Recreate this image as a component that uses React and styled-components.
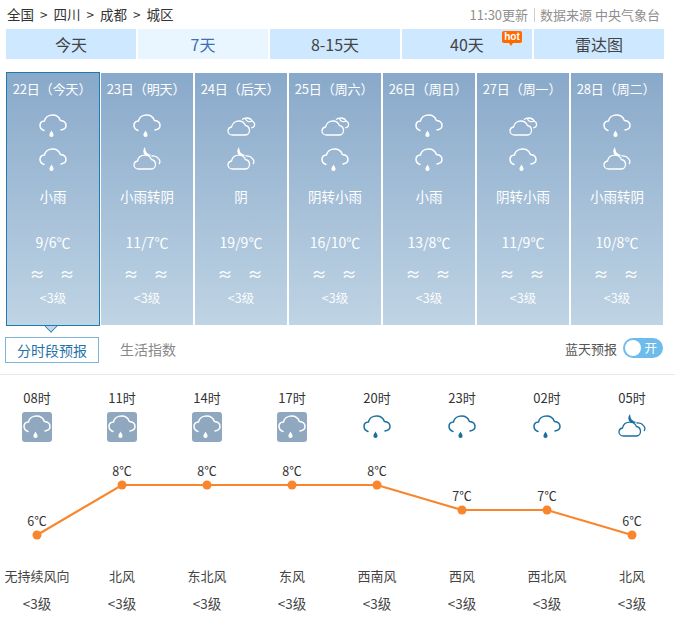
import React from "react";
import styled, { createGlobalStyle } from "styled-components";

const Global = createGlobalStyle`
  html, body { margin: 0; padding: 0; background: #fff; }
  body { font-family: "Noto Sans CJK SC", "Noto Sans", sans-serif; color: #333; overflow: hidden; }
  * { box-sizing: border-box; }
`;

const Page = styled.div`width: 675px; height: 635px; position: relative; overflow: hidden;`;
const TopBar = styled.div`
  height: 29px; padding: 0 15px 0 7px; display: flex; justify-content: space-between; align-items: center; line-height: 29px;
`;
const Crumb = styled.div`color: #333; font-size: 13.5px; white-space: pre; display: flex; gap: 6px;`;
const Source = styled.div`color: #8f8f8f; font-size: 13px; white-space: pre; display: flex; align-items: center;`;
const Sep = styled.i`display: inline-block; width: 1px; height: 14px; background: #ccc; margin: 0 5px 0 6px;`;

const Tabs = styled.div`display: flex; gap: 2px; padding-left: 6px;`;
const Tab = styled.div`
  width: 130px; height: 30px; line-height: 30px; text-align: center; font-size: 16px; position: relative;
  background: ${p => (p.$active ? "#eaf6ff" : "#cde8ff")};
  color: ${p => (p.$active ? "#3f6fb6" : "#444")};
`;
const Hot = styled.span`
  position: absolute; left: 100px; top: 2px; width: 20px; height: 12px; background: #ff6a00; color: #fff; font: bold 10px/12px "Liberation Sans", sans-serif;
  border-radius: 2px; text-align: center;
  &::after { content: ""; position: absolute; left: 7px; bottom: -3px; border: 2px solid transparent; border-top: 3px solid #ff6a00; border-bottom: 0; }
`;

const Days = styled.div`display: flex; gap: 2px; padding-left: 6px; margin-top: 13px; height: 254px; align-items: flex-start;`;
const Day = styled.div`
  position: relative; flex: none; display: flex; flex-direction: column; align-items: center; color: #fff;
  width: ${p => (p.$active ? "94px" : "92px")};
  height: ${p => (p.$active ? "254px" : "252px")};
  margin-top: ${p => (p.$active ? "0" : "1px")};
  padding-top: 6px;
  margin-right: ${p => (p.$active ? "-1px" : "0")};
  border: ${p => (p.$active ? "1px solid #1e7bb0" : "0")};
  background: linear-gradient(180deg, #89a9ca 0%, #bfd4e4 100%);
`;
const Arrow = styled.span`
  position: absolute; left: 39px; bottom: -6px; width: 10px; height: 10px; transform: rotate(45deg);
  background: #c3d7e6; border-right: 1.5px solid #1e7bb0; border-bottom: 1.5px solid #1e7bb0;
  clip-path: polygon(100% 0, 100% 100%, 0 100%);
`;
const DayHead = styled.div`height: 20px; line-height: 20px; font-size: 13px; white-space: nowrap; letter-spacing: -0.1px; margin-left: -2px;`;
const DayIcons = styled.div`margin-top: 15px; display: flex; flex-direction: column; gap: 12px; height: 56px; align-items: center;`;
const Desc = styled.div`margin-top: 16px; height: 20px; line-height: 20px; font-size: 13.5px;`;
const Temp = styled.div`margin-top: 26px; height: 20px; line-height: 20px; font-size: 14px;`;
const Waves = styled.div`margin-top: 12px; height: 20px; line-height: 20px; font-size: 15px; font-weight: 500; display: flex; gap: 15px; margin-left: -2px;`;
const Level = styled.div`margin-top: 4px; height: 20px; line-height: 20px; font-size: 12.5px; opacity: .95;`;

const SubBar = styled.div`
  margin-top: 11px; height: 38px; padding: 0 12px 11px 5px; display: flex; align-items: flex-start; border-bottom: 1px solid #e8e8e8; position: relative;
`;
const SubTab = styled.div`
  height: 26px; line-height: 24px; font-size: 14px; text-align: center; color: ${p => (p.$active ? "#1f72a8" : "#888")};
  width: ${p => (p.$active ? "94px" : "auto")};
  margin-left: ${p => (p.$active ? "0" : "21px")};
  border: ${p => (p.$active ? "1px solid #7fb6d8" : "0")};
`;
const Blue = styled.div`margin-left: auto; display: flex; align-items: center; gap: 6px; font-size: 13px; color: #555; height: 20px; margin-top: 1px;`;
const Toggle = styled.div`
  width: 40px; height: 20px; border-radius: 10px; background: #6ebcec; position: relative; color: #fff; font-size: 12.5px; line-height: 20px; text-align: right; padding-right: 6px;
  &::before { content: ""; position: absolute; left: 2px; top: 2px; width: 16px; height: 16px; border-radius: 50%; background: #fff; }
`;

const Hours = styled.div`display: grid; grid-template-columns: repeat(8, 85px); margin-left: -5.5px; margin-top: 13px; text-align: center;`;
const WindRows = styled(Hours)`margin-top: 0;`;
const HourLabel = styled.div`height: 20px; line-height: 20px; font-size: 13px; color: #333;`;
const HourIcon = styled.div`height: 30px; margin-top: 4px; display: flex; justify-content: center;`;
const Tile = styled.div`
  width: 30px; height: 30px; border-radius: 3px; display: flex; align-items: center; justify-content: center; padding-bottom: 2px;
  background: ${p => (p.$filled ? "#90a8bf" : "transparent")};
`;

const Chart = styled.div`position: relative; height: 124px; width: 675px;`;
const ChartSvg = styled.svg`display: block; width: 675px; height: 124px;`;
const TempTag = styled.span`
  position: absolute; width: 60px; margin-left: -30px; text-align: center; font-size: 12.5px; line-height: 16px; color: #333;
`;
const Wind = styled.div`height: 20px; line-height: 20px; font-size: 13px; color: #444; white-space: nowrap;`;
const WindLevel = styled.div`height: 20px; line-height: 20px; font-size: 13.5px; color: #444; margin-top: 7px;`;
const Glyph = styled.svg`display: block; width: 28px; height: 22px; overflow: visible; flex: none;`;

const RainGlyph = ({ color = "#fff" }) => (
  <Glyph viewBox="0 0 28 22" fill="none">
    <path d="M5 16.5C2.5 15.5 1 13.8 1 11.5 1 9 3 7.2 5.4 7 6.2 3.6 9.6 1 13.6 1c3.8 0 6.6 2.2 7.8 5.4C24.8 6.6 27 8.6 27 11.5c0 2.1-1.8 4-5 4.5" stroke={color} strokeWidth="1.5" strokeLinecap="round" />
    <path d="M12.5 16.5c-.8 1.6-2.1 3-2.1 4.5a2.1 2.1 0 0 0 4.2 0c0-1.5-1.3-2.9-2.1-4.5z" fill={color} />
  </Glyph>
);
const CloudyGlyph = ({ color = "#fff" }) => (
  <Glyph viewBox="0 0 28 22" fill="none" stroke={color} strokeWidth="1.3">
    <path d="M5.5 21C3 21 1 19.3 1 17c0-2.2 1.6-3.6 3.5-4C5.2 9.800 8 7 12 7c3 0 5.400 1.800 6.400 4.500C21 12 22.500 14.200 22.500 16.500 22.500 19 20.500 21 18 21z" />
    <path d="M15 5.600C16.300 4.500 18 4 20 4c2.500 0 4.200 1.200 5.200 3 1.600.7 2.400 2 2.400 3.400 0 1.800-1.500 3.100-3.500 3.400" />
    <path d="M18.500 5c1 2.500 3.500 3.500 7 2" />
  </Glyph>
);
const MoonGlyph = ({ color = "#fff" }) => (
  <Glyph viewBox="0 0 28 22" fill="none" stroke={color} strokeWidth="1.3">
    <path d="M5.500 21C3 21 1 19.300 1 17c0-2.200 1.600-3.600 3.500-4C5.200 9.800 8 7.200 12 7.200c3 0 5.400 1.700 6.400 4.300 2.600.5 4.100 2.700 4.100 5 0 2.500-2 4.500-4.500 4.500z" />
    <path d="M18.500 8c2.800-.4 5.500.6 6.800 2.400 1.800 1.400 2.200 3.800.7 5.600" />
    <path d="M12-1C9.500 2 10 6 13 7.500c2 1 4 .5 5.500-.5-3-.5-5-2-5.700-4C12.400 1.800 12.200.5 12-1z" fill={color} stroke="none" />
  </Glyph>
);
const glyphs = { rain: RainGlyph, cloud: CloudyGlyph, moon: MoonGlyph };

const days = [
  { h: "22日（今天）", i: ["rain", "rain"], d: "小雨", t: "9/6℃", active: true },
  { h: "23日（明天）", i: ["rain", "moon"], d: "小雨转阴", t: "11/7℃" },
  { h: "24日（后天）", i: ["cloud", "moon"], d: "阴", t: "19/9℃" },
  { h: "25日（周六）", i: ["cloud", "rain"], d: "阴转小雨", t: "16/10℃" },
  { h: "26日（周日）", i: ["rain", "rain"], d: "小雨", t: "13/8℃" },
  { h: "27日（周一）", i: ["cloud", "rain"], d: "阴转小雨", t: "11/9℃" },
  { h: "28日（周二）", i: ["rain", "moon"], d: "小雨转阴", t: "10/8℃" },
];

const hours = [
  { h: "08时", k: "rain", f: true, t: 6, wind: "无持续风向" },
  { h: "11时", k: "rain", f: true, t: 8, wind: "北风" },
  { h: "14时", k: "rain", f: true, t: 8, wind: "东北风" },
  { h: "17时", k: "rain", f: true, t: 8, wind: "东风" },
  { h: "20时", k: "rain", t: 8, wind: "西南风" },
  { h: "23时", k: "rain", t: 7, wind: "西风" },
  { h: "02时", k: "rain", t: 7, wind: "西北风" },
  { h: "05时", k: "moon", t: 6, wind: "北风" },
];
const px = i => 37 + i * 85;
const py = t => 93 - (t - 6) * 25;

export default function App() {
  return (
    <Page>
      <Global />
      <TopBar>
        <Crumb><span>全国</span><span>&gt;</span><span>四川</span><span>&gt;</span><span>成都</span><span>&gt;</span><span>城区</span></Crumb>
        <Source>11:30更新<Sep />数据来源 中央气象台</Source>
      </TopBar>
      <Tabs>
        <Tab>今天</Tab>
        <Tab $active>7天</Tab>
        <Tab>8-15天</Tab>
        <Tab>40天<Hot>hot</Hot></Tab>
        <Tab>雷达图</Tab>
      </Tabs>
      <Days>
        {days.map(x => (
          <Day key={x.h} $active={x.active}>
            <DayHead>{x.h}</DayHead>
            <DayIcons>
              {x.i.map((k, n) => {
                const G = glyphs[k];
                return <G key={n} />;
              })}
            </DayIcons>
            <Desc>{x.d}</Desc>
            <Temp>{x.t}</Temp>
            <Waves><span>≈</span><span>≈</span></Waves>
            <Level>&lt;3级</Level>
            {x.active && <Arrow />}
          </Day>
        ))}
      </Days>
      <SubBar>
        <SubTab $active>分时段预报</SubTab>
        <SubTab>生活指数</SubTab>
        <Blue>蓝天预报<Toggle>开</Toggle></Blue>
      </SubBar>
      <Hours>
        {hours.map(x => (
          <HourLabel key={x.h}>{x.h}</HourLabel>
        ))}
        {hours.map(x => {
          const G = glyphs[x.k];
          return (
            <HourIcon key={x.h}>
              <Tile $filled={x.f}><G color={x.f ? "#fff" : "#1a6f9f"} /></Tile>
            </HourIcon>
          );
        })}
      </Hours>
      <Chart>
        <ChartSvg viewBox="0 0 675 124">
          <polyline fill="none" stroke="#f9852c" strokeWidth="2.2" points={hours.map((x, i) => `${px(i)},${py(x.t)}`).join(" ")} />
          {hours.map((x, i) => (
            <circle key={x.h} cx={px(i)} cy={py(x.t)} r="4.5" fill="#f9852c" />
          ))}
        </ChartSvg>
        {hours.map((x, i) => (
          <TempTag key={x.h} style={{ left: px(i), top: py(x.t) - 22 }}>{x.t}℃</TempTag>
        ))}
      </Chart>
      <WindRows>
        {hours.map(x => <Wind key={x.h}>{x.wind}</Wind>)}
        {hours.map(x => <WindLevel key={x.h}>&lt;3级</WindLevel>)}
      </WindRows>
    </Page>
  );
}
